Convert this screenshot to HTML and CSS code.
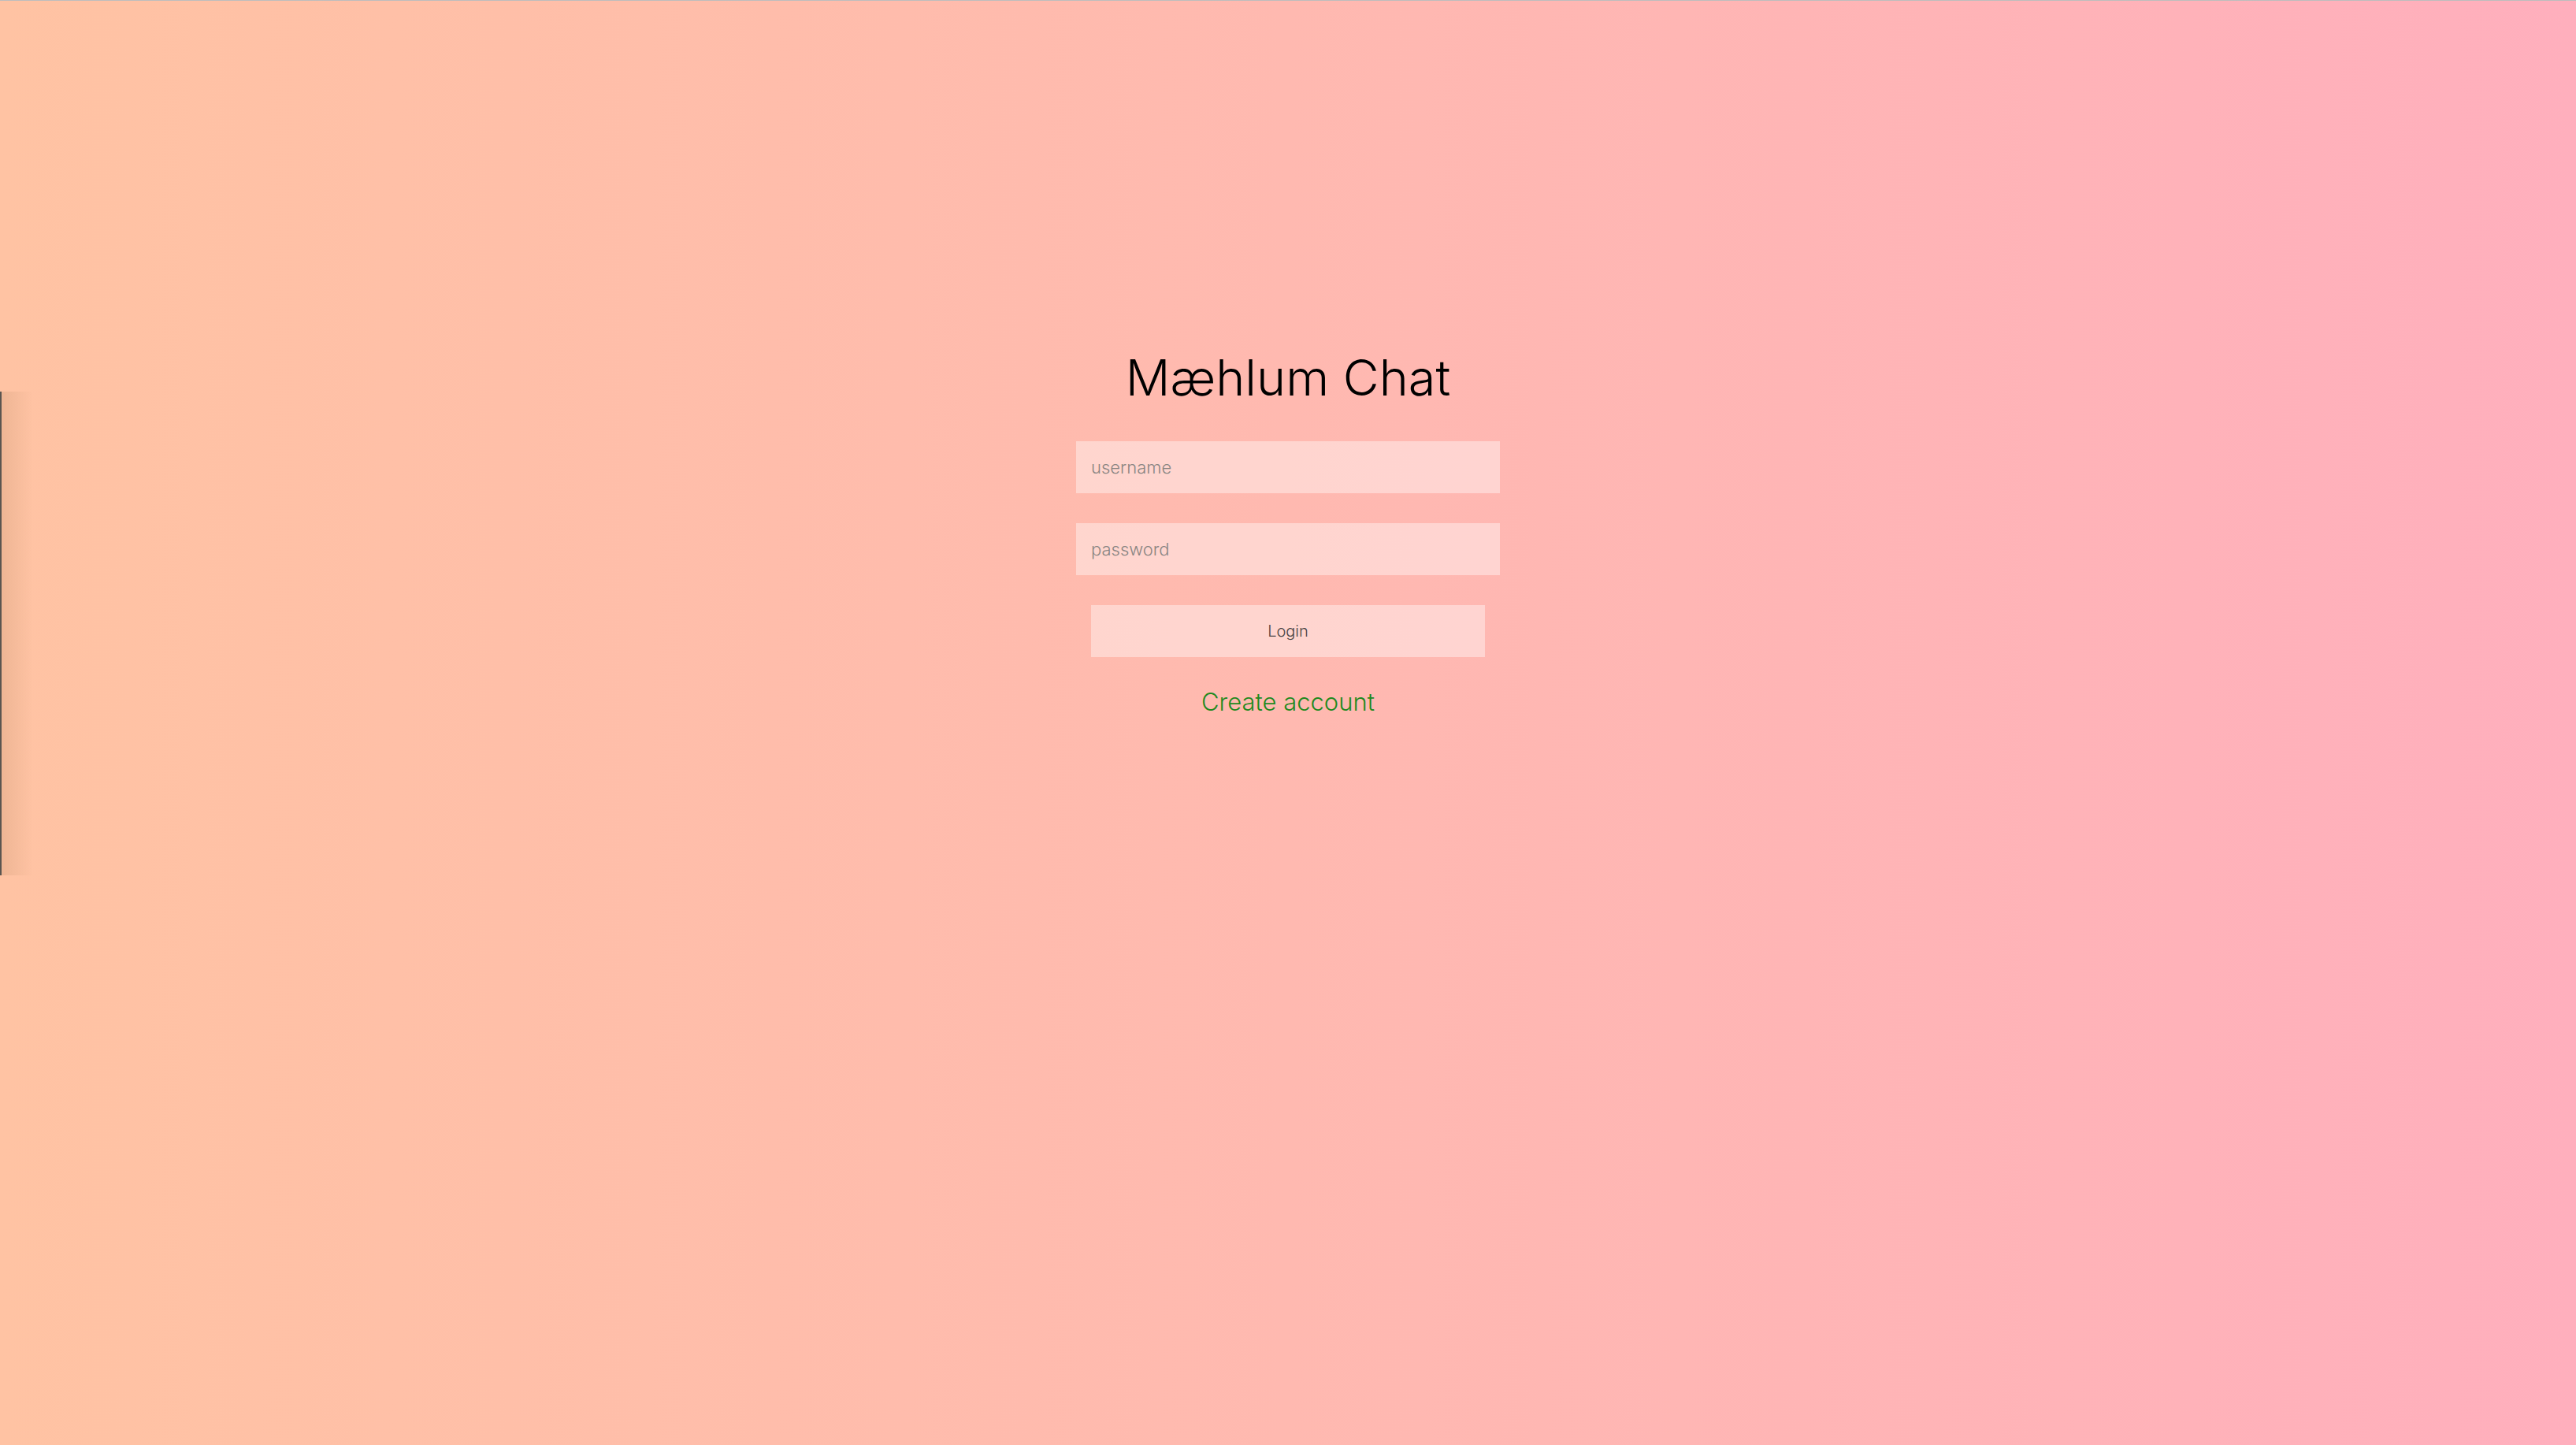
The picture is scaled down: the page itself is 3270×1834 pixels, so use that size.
FILE: index.html
```html
<!DOCTYPE html>
<html lang="en">
<head>
<meta charset="utf-8">
<title>Mæhlum Chat</title>
<link rel="stylesheet" href="styles.css">
</head>
<body>
<div class="edge-shadow"></div>
<main class="page">
  <h1 class="title">Mæhlum Chat</h1>
  <form class="login-form">
    <input class="field" type="text" placeholder="username">
    <input class="field" type="password" placeholder="password">
    <button class="login-btn" type="button">Login</button>
  </form>
  <a class="create-link" href="#">Create account</a>
</main>
</body>
</html>
```

FILE: styles.css
```css
html, body {
  margin: 0;
  padding: 0;
  height: 100%;
}
body {
  background: linear-gradient(to right, #ffc3a3, #ffafbd);
  font-family: Inter, "Open Sans", "Liberation Sans", sans-serif;
  border-top: 1px solid #bdbdbd;
  box-sizing: border-box;
  position: relative;
  overflow: hidden;
}
.edge-shadow {
  position: absolute;
  left: 0;
  top: 496px;
  width: 40px;
  height: 614px;
  border-left: 2px solid #5a5550;
  background: linear-gradient(to right, rgba(150, 110, 70, 0.16), rgba(150, 110, 70, 0));
}
.page {
  display: flex;
  flex-direction: column;
  align-items: center;
  padding-top: 440px;
}
.title {
  margin: 0;
  font-size: 63px;
  line-height: 77px;
  font-weight: 300;
  color: #000;
}
.login-form {
  display: flex;
  flex-direction: column;
  align-items: center;
  gap: 38px;
  margin-top: 42px;
}
.field {
  box-sizing: border-box;
  width: 538px;
  height: 66px;
  border: none;
  outline: none;
  background: rgba(255, 255, 255, 0.4);
  padding: 0 19px;
  font-family: inherit;
  font-weight: 300;
  font-size: 22px;
  color: #333;
}
.field::placeholder {
  color: #8a8583;
}
.login-btn {
  width: 500px;
  height: 66px;
  border: none;
  background: rgba(255, 255, 255, 0.4);
  font-family: inherit;
  font-weight: 300;
  font-size: 20px;
  color: #4a4444;
  cursor: pointer;
}
.create-link {
  margin-top: 38px;
  font-size: 31px;
  line-height: 38px;
  font-weight: 300;
  color: #1f8a1f;
  text-decoration: none;
}
```
